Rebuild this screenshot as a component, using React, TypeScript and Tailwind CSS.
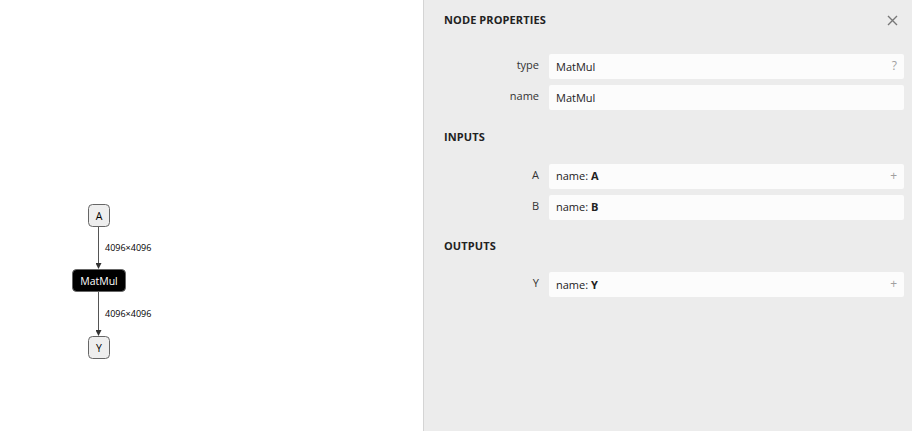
import React from "react";

const font = { fontFamily: '"Open Sans", "Noto Sans", sans-serif' };

function Row({ label, children, icon }: { label: string; children: React.ReactNode; icon?: string }) {
  return (
    <div className="flex items-center h-[25px]">
      <div className="w-[105px] pr-[10px] text-right text-[11px] text-[#333] pb-[2px]">{label}</div>
      <div className="flex-1 h-[25px] bg-[#fcfcfc] rounded-[2px] flex items-center justify-between pl-[7px] pr-[7px] pt-[1px] text-[11px] text-[#222]">
        <span>{children}</span>
        {icon && <span className="text-[12px] text-[#a0a0a0] pb-[2px]">{icon}</span>}
      </div>
    </div>
  );
}

function Header({ text }: { text: string }) {
  return <div className="text-[11px] font-bold text-[#222] tracking-[0.1px]">{text}</div>;
}

export default function App() {
  return (
    <div className="w-[912px] h-[431px] flex bg-white overflow-hidden" style={font}>
      <div className="w-[423px] h-full relative">
        <svg width="423" height="431" className="absolute inset-0">
          <defs>
            <marker id="arr" markerWidth="6" markerHeight="6" refX="5" refY="3" orient="auto" markerUnits="userSpaceOnUse">
              <path d="M0,0 L6,3 L0,6 z" fill="#333" />
            </marker>
          </defs>
          <line x1="98.5" y1="226" x2="98.5" y2="268" stroke="#555" strokeWidth="1" markerEnd="url(#arr)" />
          <line x1="98.5" y1="292" x2="98.5" y2="335" stroke="#555" strokeWidth="1" markerEnd="url(#arr)" />
          <rect x="88.5" y="204.5" width="21" height="22" rx="4" fill="#eeeeee" stroke="#666" />
          <text x="99" y="219.5" textAnchor="middle" fontSize="10.5" fill="#000" style={font}>A</text>
          <rect x="72.5" y="269.5" width="53" height="22" rx="4" fill="#000" stroke="#666" />
          <text x="99" y="284.5" textAnchor="middle" fontSize="10.5" fill="#fff" style={font}>MatMul</text>
          <rect x="88.5" y="336.5" width="21" height="22" rx="4" fill="#eeeeee" stroke="#666" />
          <text x="99" y="351.5" textAnchor="middle" fontSize="10.5" fill="#000" style={font}>Y</text>
          <text x="105" y="251" fontSize="9" fill="#000" style={font}>4096×4096</text>
          <text x="105" y="317" fontSize="9" fill="#000" style={font}>4096×4096</text>
        </svg>
      </div>
      <div className="flex-1 h-full bg-[#ececec] border-l border-[#d4d4d4] pl-[20px] pr-[8px] pt-[12px] flex flex-col">
        <div className="flex items-center justify-between h-[17px]">
          <Header text="NODE PROPERTIES" />
          <svg width="11" height="11" viewBox="0 0 11 11" className="mr-[6px]">
            <path d="M1,1 L10,10 M10,1 L1,10" stroke="#777" strokeWidth="1.4" />
          </svg>
        </div>
        <div className="mt-[25px] flex flex-col gap-[6px]">
          <Row label="type" icon="?">MatMul</Row>
          <Row label="name">MatMul</Row>
        </div>
        <div className="mt-[19px]"><Header text="INPUTS" /></div>
        <div className="mt-[18px] flex flex-col gap-[6px]">
          <Row label="A" icon="+">name: <b>A</b></Row>
          <Row label="B">name: <b>B</b></Row>
        </div>
        <div className="mt-[18px]"><Header text="OUTPUTS" /></div>
        <div className="mt-[18px] flex flex-col gap-[6px]">
          <Row label="Y" icon="+">name: <b>Y</b></Row>
        </div>
      </div>
    </div>
  );
}
